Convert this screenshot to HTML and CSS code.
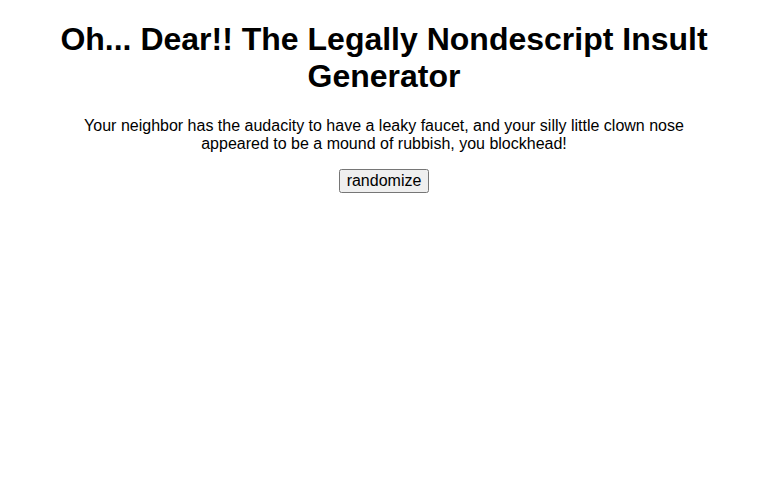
FILE: index.html
```html
<!DOCTYPE html>
<html>
<head>
<meta charset="utf-8">
<title>Insult Generator</title>
<link rel="stylesheet" href="styles.css">
</head>
<body>
<h1 class="title">Oh... Dear!! The Legally Nondescript Insult Generator</h1>
<p class="insult">Your neighbor has the audacity to have a leaky faucet, and your silly little clown nose appeared to be a mound of rubbish, you blockhead!</p>
<button class="randomize">randomize</button>
</body>
</html>
```
FILE: styles.css
```css
body {
  margin: 0 8px 8px;
  font-family: "Liberation Sans", Arial, sans-serif;
  text-align: center;
  background: #fff;
  color: #000;
}
.title {
  font-size: 32px;
}
.insult {
  font-size: 16px;
  max-width: 610px;
  margin-left: auto;
  margin-right: auto;
}
.randomize {
  font-family: "Liberation Sans", Arial, sans-serif;
  font-size: 16px;
}
```
